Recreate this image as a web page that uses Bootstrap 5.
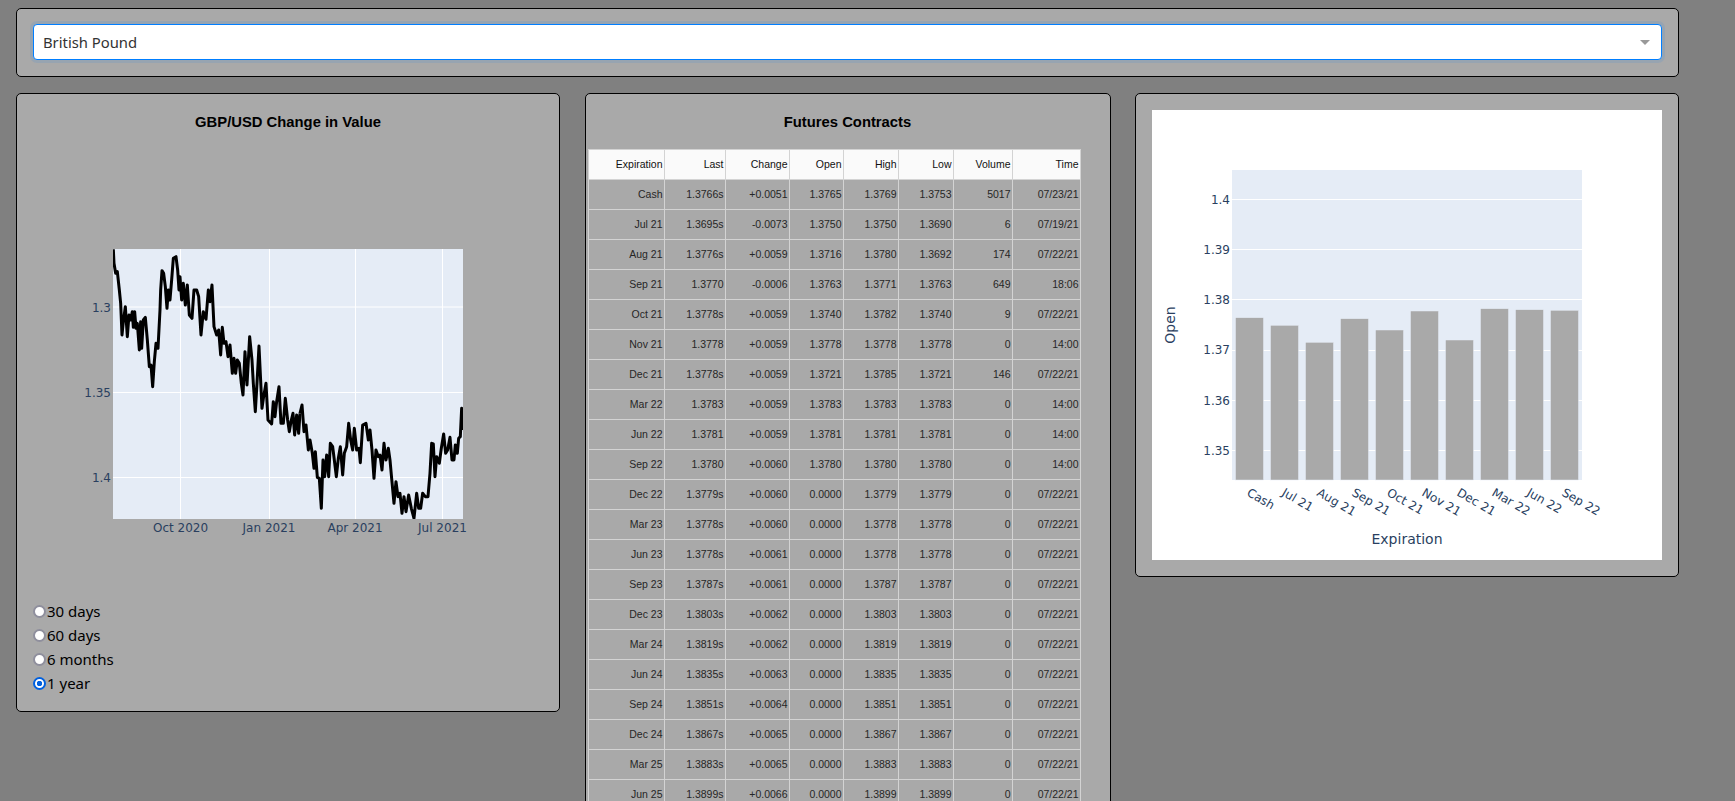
<!DOCTYPE html>
<html lang="en">
<head>
    <meta charset="UTF-8">
    <meta name="viewport" content="width=device-width, initial-scale=1.0">
    <title>Currency Futures</title>
    <link href="https://cdn.jsdelivr.net/npm/bootstrap@5.3.0/dist/css/bootstrap.min.css" rel="stylesheet">
    <style>
        html, body {
            height: 100%;
            overflow: hidden;
        }

        body {
            background-color: #808080;
            font-family: "Noto Sans", "Liberation Sans", sans-serif;
            color: #000;
        }

        .page-wrap {
            width: 1679px;
            padding: 8px 0 0 16px;
        }

        .panel-gray {
            background-color: #a9a9a9;
            border: 1px solid #000;
            border-radius: 5px;
        }

        .panel-top {
            padding: 15px 16px 16px;
            margin-bottom: 16px;
        }

        .currency-select {
            height: 36px;
            padding: 0 11px 0 9px;
            background-color: #fff;
            border: 1px solid #007eff;
            border-radius: 4px;
            box-shadow: 0 0 0 3px rgba(0, 126, 255, .1);
            color: #333;
            font-size: 14.8px;
        }

        .select-caret {
            border-style: solid;
            border-width: 5px 5px 2.5px;
            border-color: #999 transparent transparent;
            margin-top: 3px;
        }

        .panels {
            column-gap: 24.5px;
        }

        .panel-chart { width: 544px; padding: 16px; }
        .panel-table { width: 526px; padding: 16px 2.5px; height: 900px; }
        .panel-bars { width: 544px; padding: 16px; }

        .panel-title {
            font-family: "Liberation Sans", Arial, sans-serif;
            font-size: 14.8px;
            font-weight: 700;
            line-height: 24px;
            margin-bottom: 15px;
            text-align: center;
        }

        .plot-svg {
            display: block;
            font-family: "DejaVu Sans", Verdana, sans-serif;
            font-size: 12px;
            fill: #2a3f5f;
        }

        .plot-bg { fill: #e5ecf6; }
        .plot-grid { stroke: #fff; stroke-width: 1; }
        .plot-line { fill: none; stroke: #000; stroke-width: 9; stroke-linejoin: round; }
        .plot-bar { fill: #a9a9a9; stroke: #e5ecf6; stroke-width: .5; }
        .axis-name { font-size: 14px; }

        .range-option {
            display: flex;
            align-items: center;
            height: 24px;
            font-size: 15px;
        }

        .range-option input {
            appearance: none;
            flex: none;
            width: 13px;
            height: 13px;
            margin: 1px 1px 0 0;
            background-color: #fff;
            border: 2px solid #8f8f9d;
            border-radius: 50%;
        }

        .range-option input:checked {
            border-color: #0060df;
            background: radial-gradient(circle, #0060df 0 2.5px, #fff 3px);
        }

        .fut-table.table {
            width: 492px;
            table-layout: fixed;
            margin: 0;
            font-family: "Liberation Sans", Arial, sans-serif;
            font-size: 10.5px;
            --bs-table-bg: transparent;
            --bs-table-color: #262626;
            --bs-table-border-color: #d3d3d3;
        }

        .fut-table.table > :not(caption) > * > * {
            height: 30px;
            padding: 0 1.5px;
            text-align: right;
            vertical-align: middle;
            font-weight: 400;
        }

        .fut-table.table > thead > tr > th {
            background-color: #fafafa;
            color: #111;
        }

        .fut-table th:nth-child(1) { width: 76px; }
        .fut-table th:nth-child(2) { width: 61px; }
        .fut-table th:nth-child(3) { width: 64px; }
        .fut-table th:nth-child(4) { width: 54px; }
        .fut-table th:nth-child(5) { width: 55px; }
        .fut-table th:nth-child(6) { width: 55px; }
        .fut-table th:nth-child(7) { width: 59px; }
        .fut-table th:nth-child(8) { width: 68px; }
    </style>
</head>
<body>

<div class="page-wrap">
    <!-- Currency picker -->
    <div class="panel-gray panel-top">
        <div class="currency-select d-flex align-items-center justify-content-between">
            <span>British Pound</span>
            <span class="select-caret"></span>
        </div>
    </div>

    <div class="panels d-flex align-items-start">
        <!-- Change in value -->
        <div class="panel-gray panel-chart">
            <div class="panel-title">GBP/USD Change in Value</div>
            <svg class="plot-svg" width="510" height="450" viewBox="0 0 510 450">
                <clipPath id="lineClip"><rect x="80" y="100" width="350" height="270"></rect></clipPath>
                <rect class="plot-bg" x="80" y="100" width="350" height="270"></rect>
                <line class="plot-grid" x1="147.5" y1="100" x2="147.5" y2="370"></line>
                <line class="plot-grid" x1="236.5" y1="100" x2="236.5" y2="370"></line>
                <line class="plot-grid" x1="322.5" y1="100" x2="322.5" y2="370"></line>
                <line class="plot-grid" x1="409.5" y1="100" x2="409.5" y2="370"></line>
                <line class="plot-grid" x1="80" y1="158" x2="430" y2="158"></line>
                <line class="plot-grid" x1="80" y1="243.5" x2="430" y2="243.5"></line>
                <line class="plot-grid" x1="80" y1="328.5" x2="430" y2="328.5"></line>
                <g clip-path="url(#lineClip)">
                    <polyline class="plot-line" transform="translate(67 91) scale(.3333)" points="40,28 42,70 47,100 52,95 58,150 62,190 66,285 70,245 76,200 82,290 87,225 92,240 97,215 100,262 104,215 108,265 112,250 118,330 122,245 125,325 130,240 136,232 142,300 148,380 153,375 158,440 163,365 168,310 174,325 180,210 182,150 186,92 191,100 196,140 201,205 205,150 210,180 215,120 220,55 228,50 233,90 237,150 240,110 245,180 250,130 256,195 262,135 268,225 276,235 282,150 290,150 296,170 303,285 310,215 318,238 325,150 330,185 336,135 342,260 350,285 356,270 362,345 367,262 372,310 378,305 384,350 390,315 397,400 402,355 407,400 412,360 418,370 424,430 429,465 435,335 441,435 449,290 456,360 460,430 466,515 471,430 477,318 486,505 491,470 498,430 504,540 515,552 520,485 525,530 530,485 537,440 543,550 550,550 556,475 563,540 568,575 573,545 579,520 584,585 590,525 596,580 600,520"></polyline>
                    <polyline class="plot-line" transform="translate(247 91) scale(.3333)" points="60,520 66,495 72,575 78,555 85,630 90,600 97,640 102,685 106,635 112,712 118,715 124,805 129,660 134,710 140,645 146,710 151,610 158,620 163,660 169,710 175,655 181,620 188,705 193,640 200,620 206,550 212,600 218,630 223,565 230,630 237,625 241,668 248,555 258,550 265,600 270,570 276,630 282,715 288,630 295,650 300,645 306,690 312,610 318,660 325,625 330,660 335,715 342,790 348,725 354,770 360,760 366,820 372,770 378,815 386,765 394,805 402,835 410,760 416,805 422,805 428,760 436,770 444,770 450,700 455,610 460,612 465,710 470,650 478,670 484,625 491,582 497,640 503,630 510,592 516,660 522,660 526,615 532,640 536,595 541,590 545,505 549,570"></polyline>
                </g>
                <text x="78" y="163" text-anchor="end">1.3</text>
                <text x="78" y="248" text-anchor="end">1.35</text>
                <text x="78" y="333" text-anchor="end">1.4</text>
                <text x="147.5" y="383" text-anchor="middle">Oct 2020</text>
                <text x="236" y="383" text-anchor="middle">Jan 2021</text>
                <text x="322" y="383" text-anchor="middle">Apr 2021</text>
                <text x="409.5" y="383" text-anchor="middle">Jul 2021</text>
            </svg>
            <div>
                <label class="range-option"><input type="radio" name="range">30 days</label>
                <label class="range-option"><input type="radio" name="range">60 days</label>
                <label class="range-option"><input type="radio" name="range">6 months</label>
                <label class="range-option"><input type="radio" name="range" checked>1 year</label>
            </div>
        </div>

        <!-- Contract table -->
        <div class="panel-gray panel-table">
            <div class="panel-title">Futures Contracts</div>
            <table class="table table-bordered fut-table">
                <thead>
                    <tr><th>Expiration</th><th>Last</th><th>Change</th><th>Open</th><th>High</th><th>Low</th><th>Volume</th><th>Time</th></tr>
                </thead>
                <tbody>
                    <tr><td>Cash</td><td>1.3766s</td><td>+0.0051</td><td>1.3765</td><td>1.3769</td><td>1.3753</td><td>5017</td><td>07/23/21</td></tr>
                    <tr><td>Jul 21</td><td>1.3695s</td><td>-0.0073</td><td>1.3750</td><td>1.3750</td><td>1.3690</td><td>6</td><td>07/19/21</td></tr>
                    <tr><td>Aug 21</td><td>1.3776s</td><td>+0.0059</td><td>1.3716</td><td>1.3780</td><td>1.3692</td><td>174</td><td>07/22/21</td></tr>
                    <tr><td>Sep 21</td><td>1.3770</td><td>-0.0006</td><td>1.3763</td><td>1.3771</td><td>1.3763</td><td>649</td><td>18:06</td></tr>
                    <tr><td>Oct 21</td><td>1.3778s</td><td>+0.0059</td><td>1.3740</td><td>1.3782</td><td>1.3740</td><td>9</td><td>07/22/21</td></tr>
                    <tr><td>Nov 21</td><td>1.3778</td><td>+0.0059</td><td>1.3778</td><td>1.3778</td><td>1.3778</td><td>0</td><td>14:00</td></tr>
                    <tr><td>Dec 21</td><td>1.3778s</td><td>+0.0059</td><td>1.3721</td><td>1.3785</td><td>1.3721</td><td>146</td><td>07/22/21</td></tr>
                    <tr><td>Mar 22</td><td>1.3783</td><td>+0.0059</td><td>1.3783</td><td>1.3783</td><td>1.3783</td><td>0</td><td>14:00</td></tr>
                    <tr><td>Jun 22</td><td>1.3781</td><td>+0.0059</td><td>1.3781</td><td>1.3781</td><td>1.3781</td><td>0</td><td>14:00</td></tr>
                    <tr><td>Sep 22</td><td>1.3780</td><td>+0.0060</td><td>1.3780</td><td>1.3780</td><td>1.3780</td><td>0</td><td>14:00</td></tr>
                    <tr><td>Dec 22</td><td>1.3779s</td><td>+0.0060</td><td>0.0000</td><td>1.3779</td><td>1.3779</td><td>0</td><td>07/22/21</td></tr>
                    <tr><td>Mar 23</td><td>1.3778s</td><td>+0.0060</td><td>0.0000</td><td>1.3778</td><td>1.3778</td><td>0</td><td>07/22/21</td></tr>
                    <tr><td>Jun 23</td><td>1.3778s</td><td>+0.0061</td><td>0.0000</td><td>1.3778</td><td>1.3778</td><td>0</td><td>07/22/21</td></tr>
                    <tr><td>Sep 23</td><td>1.3787s</td><td>+0.0061</td><td>0.0000</td><td>1.3787</td><td>1.3787</td><td>0</td><td>07/22/21</td></tr>
                    <tr><td>Dec 23</td><td>1.3803s</td><td>+0.0062</td><td>0.0000</td><td>1.3803</td><td>1.3803</td><td>0</td><td>07/22/21</td></tr>
                    <tr><td>Mar 24</td><td>1.3819s</td><td>+0.0062</td><td>0.0000</td><td>1.3819</td><td>1.3819</td><td>0</td><td>07/22/21</td></tr>
                    <tr><td>Jun 24</td><td>1.3835s</td><td>+0.0063</td><td>0.0000</td><td>1.3835</td><td>1.3835</td><td>0</td><td>07/22/21</td></tr>
                    <tr><td>Sep 24</td><td>1.3851s</td><td>+0.0064</td><td>0.0000</td><td>1.3851</td><td>1.3851</td><td>0</td><td>07/22/21</td></tr>
                    <tr><td>Dec 24</td><td>1.3867s</td><td>+0.0065</td><td>0.0000</td><td>1.3867</td><td>1.3867</td><td>0</td><td>07/22/21</td></tr>
                    <tr><td>Mar 25</td><td>1.3883s</td><td>+0.0065</td><td>0.0000</td><td>1.3883</td><td>1.3883</td><td>0</td><td>07/22/21</td></tr>
                    <tr><td>Jun 25</td><td>1.3899s</td><td>+0.0066</td><td>0.0000</td><td>1.3899</td><td>1.3899</td><td>0</td><td>07/22/21</td></tr>
                </tbody>
            </table>
        </div>

        <!-- Open by expiration -->
        <div class="panel-gray panel-bars">
            <svg class="plot-svg bg-white" width="510" height="450" viewBox="0 0 510 450">
                <rect class="plot-bg" x="80" y="60" width="350" height="310"></rect>
                <line class="plot-grid" x1="80" y1="89.5" x2="430" y2="89.5"></line>
                <line class="plot-grid" x1="80" y1="139.5" x2="430" y2="139.5"></line>
                <line class="plot-grid" x1="80" y1="189.5" x2="430" y2="189.5"></line>
                <line class="plot-grid" x1="80" y1="240.5" x2="430" y2="240.5"></line>
                <line class="plot-grid" x1="80" y1="290.5" x2="430" y2="290.5"></line>
                <line class="plot-grid" x1="80" y1="340.5" x2="430" y2="340.5"></line>
                <rect class="plot-bar" x="83.5" y="207.7" width="28" height="162.3"></rect>
                <rect class="plot-bar" x="118.5" y="215.3" width="28" height="154.7"></rect>
                <rect class="plot-bar" x="153.5" y="232.3" width="28" height="137.7"></rect>
                <rect class="plot-bar" x="188.5" y="208.7" width="28" height="161.3"></rect>
                <rect class="plot-bar" x="223.5" y="220" width="28" height="150"></rect>
                <rect class="plot-bar" x="258.5" y="201" width="28" height="169"></rect>
                <rect class="plot-bar" x="293.5" y="230" width="28" height="140"></rect>
                <rect class="plot-bar" x="328.5" y="198.7" width="28" height="171.3"></rect>
                <rect class="plot-bar" x="363.5" y="199.7" width="28" height="170.3"></rect>
                <rect class="plot-bar" x="398.5" y="200.3" width="28" height="169.7"></rect>
                <text x="78" y="94" text-anchor="end">1.4</text>
                <text x="78" y="144" text-anchor="end">1.39</text>
                <text x="78" y="194" text-anchor="end">1.38</text>
                <text x="78" y="244" text-anchor="end">1.37</text>
                <text x="78" y="295" text-anchor="end">1.36</text>
                <text x="78" y="345" text-anchor="end">1.35</text>
                <text transform="translate(94 385) rotate(30)">Cash</text>
                <text transform="translate(129 385) rotate(30)">Jul 21</text>
                <text transform="translate(164 385) rotate(30)">Aug 21</text>
                <text transform="translate(199 385) rotate(30)">Sep 21</text>
                <text transform="translate(234 385) rotate(30)">Oct 21</text>
                <text transform="translate(269 385) rotate(30)">Nov 21</text>
                <text transform="translate(304 385) rotate(30)">Dec 21</text>
                <text transform="translate(339 385) rotate(30)">Mar 22</text>
                <text transform="translate(374 385) rotate(30)">Jun 22</text>
                <text transform="translate(409 385) rotate(30)">Sep 22</text>
                <text class="axis-name" x="255" y="434" text-anchor="middle">Expiration</text>
                <text class="axis-name" transform="translate(23 215) rotate(-90)" text-anchor="middle">Open</text>
            </svg>
        </div>
    </div>
</div>

<script src="https://cdn.jsdelivr.net/npm/bootstrap@5.3.0/dist/js/bootstrap.bundle.min.js"></script>
</body>
</html>
